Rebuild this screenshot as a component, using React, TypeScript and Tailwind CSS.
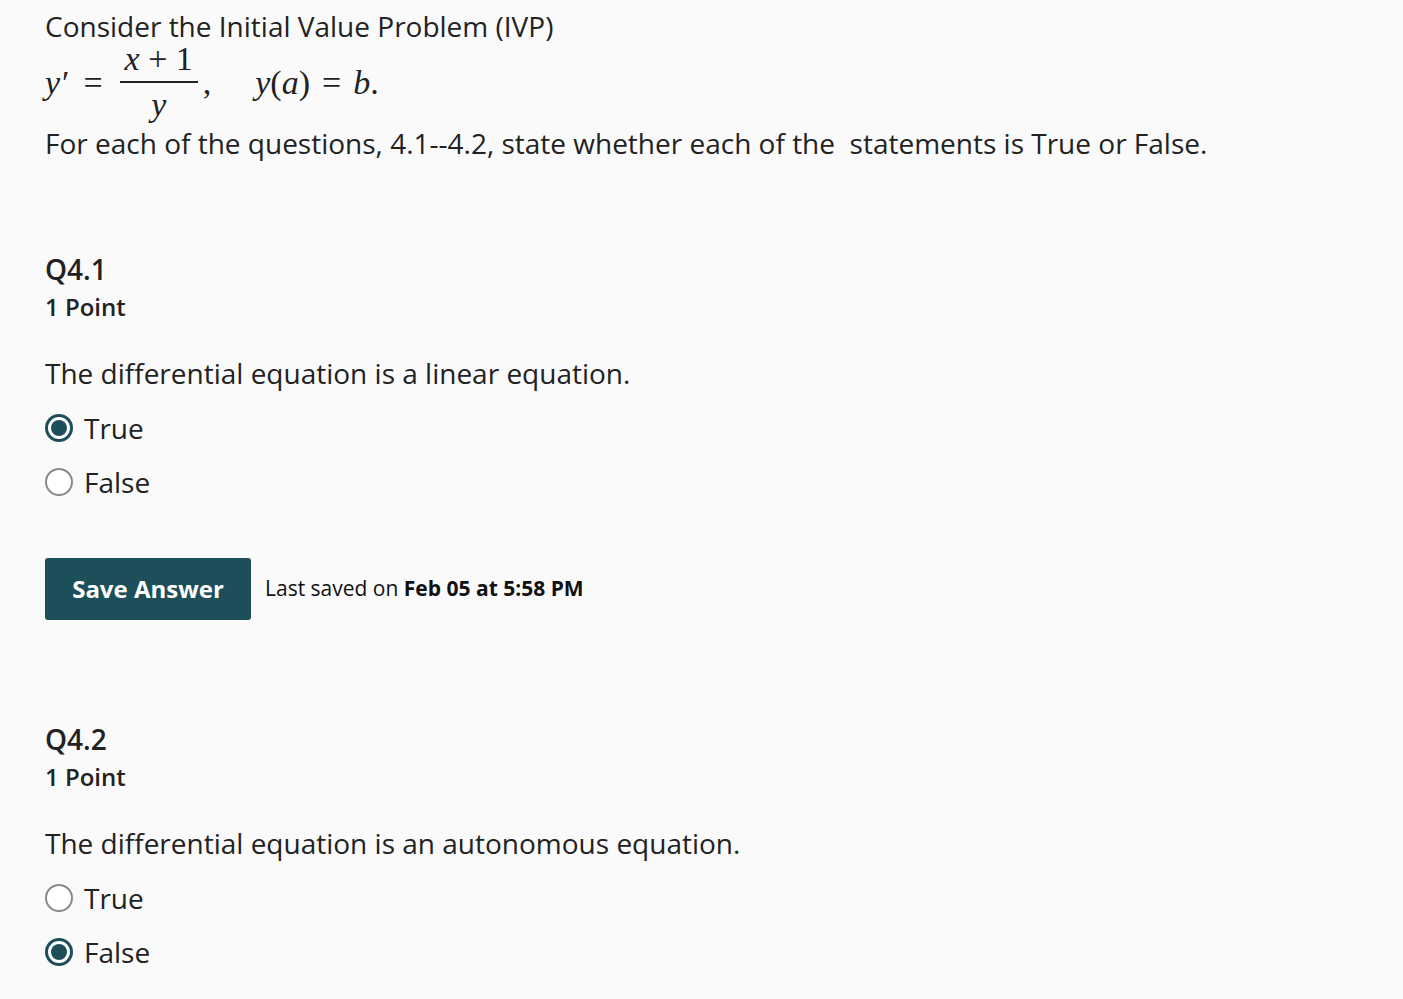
import React from 'react'

const sans = { fontFamily: '"Open Sans", "Noto Sans", sans-serif' }

function Radio({ checked, label }: { checked: boolean; label: string }) {
  return (
    <label className="flex items-center gap-[11px] h-[54px]">
      {checked ? (
        <span className="flex h-[28px] w-[28px] items-center justify-center rounded-full border-[3px] border-[#1c4f5a] bg-white">
          <span className="h-[16px] w-[16px] rounded-full bg-[#1c4f5a]" />
        </span>
      ) : (
        <span className="h-[28px] w-[28px] rounded-full border-2 border-[#8a8a8a] bg-white" />
      )}
      <span className="text-[28px] text-[#222]">{label}</span>
    </label>
  )
}

function Question({
  num,
  text,
  answer,
  saved,
}: {
  num: string
  text: string
  answer: 'True' | 'False'
  saved?: boolean
}) {
  return (
    <div>
      <div className="text-[28px] font-semibold leading-[38px] text-[#222]">{num}</div>
      <div className="text-[24px] font-semibold leading-[38px] text-[#222]">1 Point</div>
      <div className="mt-[29px] text-[28px] leading-[36px] text-[#222]">{text}</div>
      <div className="mt-[10px]">
        <Radio checked={answer === 'True'} label="True" />
        <Radio checked={answer === 'False'} label="False" />
      </div>
      {saved && (
        <div className="mt-[49px] flex items-center gap-[14px]">
          <button className="h-[62px] w-[206px] rounded-[3px] bg-[#1c4f5a] text-[24px] font-bold text-white">
            Save Answer
          </button>
          <span className="text-[21px] text-[#111]">
            Last saved on <b>Feb 05 at 5:58 PM</b>
          </span>
        </div>
      )}
    </div>
  )
}

export default function App() {
  const m = { fontFamily: '"Liberation Serif", "DejaVu Serif", serif' }
  return (
    <div className="min-h-screen bg-[#fafafa] px-[45px] pt-[10px]" style={sans}>
      <p className="text-[28px] leading-[32px] text-[#222]">Consider the Initial Value Problem (IVP)</p>
      <div className="flex h-[80px] items-center text-[34px] text-[#222]" style={m}>
        <span className="italic">y</span>
        <span className="ml-[2px]">′</span>
        <span className="ml-[14px] mr-[17px]">=</span>
        <span className="inline-flex flex-col items-center">
          <span className="px-[2px] pb-[5px] leading-[34px]">
            <span className="italic">x</span> + 1
          </span>
          <span className="h-[2px] w-[78px] bg-[#222]" />
          <span className="pt-[5px] italic leading-[34px]">y</span>
        </span>
        <span className="ml-[5px]">,</span>
        <span className="ml-[44px] italic">y</span>
        <span>(</span>
        <span className="italic">a</span>
        <span>)</span>
        <span className="mx-[12px]">=</span>
        <span className="italic">b</span>
        <span>.</span>
      </div>
      <p className="text-[28px] leading-[42px] text-[#222]">
        For each of the questions, 4.1--4.2, state whether each of the&nbsp; statements is True or False.
      </p>
      <div className="mt-[86px]">
        <Question num="Q4.1" text="The differential equation is a linear equation." answer="True" saved />
      </div>
      <div className="mt-[100px]">
        <Question num="Q4.2" text="The differential equation is an autonomous equation." answer="False" />
      </div>
    </div>
  )
}
